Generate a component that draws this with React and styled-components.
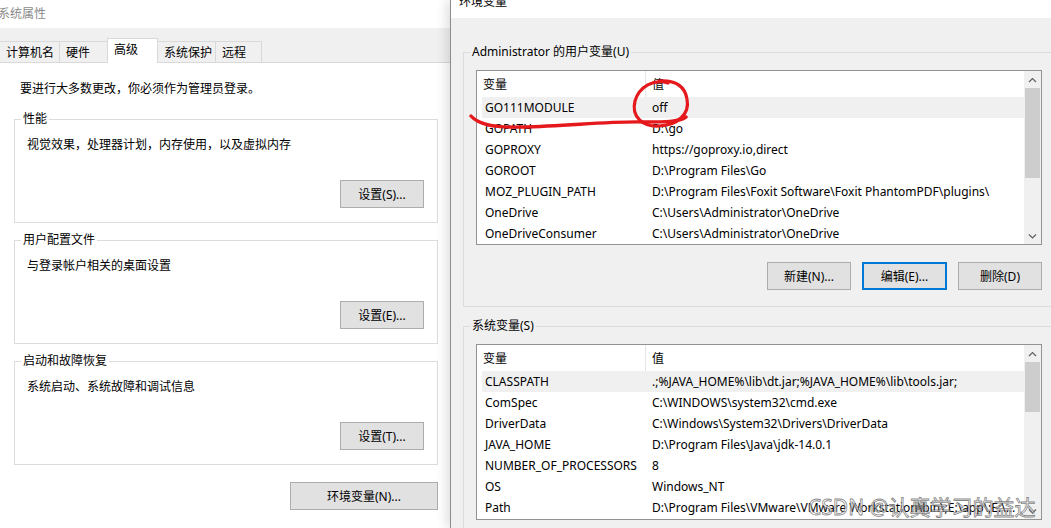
import React from 'react'
import styled, { createGlobalStyle } from 'styled-components'

const GlobalStyle = createGlobalStyle`
  html, body {
    margin: 0;
    padding: 0;
  }
  body {
    width: 1051px;
    height: 528px;
    overflow: hidden;
    background: #fff;
    font-family: "Noto Sans", "Noto Sans CJK SC", sans-serif;
    font-size: 12px;
    color: #000;
  }
  * {
    box-sizing: border-box;
  }
`

const userVars = [
    ['GO111MODULE', 'off'],
    ['GOPATH', 'D:\\go'],
    ['GOPROXY', 'https://goproxy.io,direct'],
    ['GOROOT', 'D:\\Program Files\\Go'],
    ['MOZ_PLUGIN_PATH', 'D:\\Program Files\\Foxit Software\\Foxit PhantomPDF\\plugins\\'],
    ['OneDrive', 'C:\\Users\\Administrator\\OneDrive'],
    ['OneDriveConsumer', 'C:\\Users\\Administrator\\OneDrive'],
]

const sysVars = [
    ['CLASSPATH', '.;%JAVA_HOME%\\lib\\dt.jar;%JAVA_HOME%\\lib\\tools.jar;'],
    ['ComSpec', 'C:\\WINDOWS\\system32\\cmd.exe'],
    ['DriverData', 'C:\\Windows\\System32\\Drivers\\DriverData'],
    ['JAVA_HOME', 'D:\\Program Files\\Java\\jdk-14.0.1'],
    ['NUMBER_OF_PROCESSORS', '8'],
    ['OS', 'Windows_NT'],
    ['Path', 'D:\\Program Files\\VMware\\VMware Workstation\\bin\\;E:\\app\\;E:\\app\\product\\11.2.0\\dbhome_1\\bin;'],
]

const tabs = [
    { label: '计算机名', w: 60 },
    { label: '硬件', w: 49 },
    { label: '高级', w: 51, active: true },
    { label: '系统保护', w: 59 },
    { label: '远程', w: 47 },
]

const groups = [
    { title: '性能', text: '视觉效果，处理器计划，内存使用，以及虚拟内存', btn: '设置(S)...' },
    { title: '用户配置文件', text: '与登录帐户相关的桌面设置', btn: '设置(E)...' },
    { title: '启动和故障恢复', text: '系统启动、系统故障和调试信息', btn: '设置(T)...' },
]

const Chevron = ({ down }) => (
    <svg width="9" height="6" viewBox="0 0 9 6">
        <polyline
            points={down ? '1,1.5 4.5,5 8,1.5' : '1,5 4.5,1.5 8,5'}
            fill="none"
            stroke="#606060"
            strokeWidth="1.2"
        />
    </svg>
)

const VarList = ({ rows, thumb, height }) => (
    <ListBox $h={height}>
        <ListMain>
            <ListHeader>
                <HeadCell $first>变量</HeadCell>
                <HeadCell>值</HeadCell>
            </ListHeader>
            {rows.map(([name, value], i) => (
                <ListRow key={name} $selected={i === 0}>
                    <Cell $first>{name}</Cell>
                    <Cell>{value}</Cell>
                </ListRow>
            ))}
        </ListMain>
        <ScrollBar>
            <Arrow><Chevron /></Arrow>
            <Thumb $h={thumb} />
            <ScrollSpace />
            <Arrow><Chevron down /></Arrow>
        </ScrollBar>
    </ListBox>
)

const App = () => {
    return (
        <>
            <GlobalStyle />
            <Screen>
                <LeftWindow>
                    <LeftTitle>
                        <TitleText $muted>系统属性</TitleText>
                    </LeftTitle>
                    <TabStrip>
                        {tabs.map((t) => (
                            <Tab key={t.label} $w={t.w} $active={t.active}>{t.label}</Tab>
                        ))}
                    </TabStrip>
                    <LeftContent>
                        <Notice>要进行大多数更改，你必须作为管理员登录。</Notice>
                        {groups.map((g) => (
                            <LeftGroup key={g.title}>
                                <Legend>{g.title}</Legend>
                                <GroupText>{g.text}</GroupText>
                                <ButtonRow $top={27}>
                                    <Button $w={84}>{g.btn}</Button>
                                </ButtonRow>
                            </LeftGroup>
                        ))}
                        <FooterRow>
                            <Button $w={148}>环境变量(N)...</Button>
                        </FooterRow>
                    </LeftContent>
                </LeftWindow>

                <RightWindow>
                    <RightTitle>
                        <TitleText $raised>环境变量</TitleText>
                    </RightTitle>
                    <RightBody>
                        <RightGroup>
                            <Legend>Administrator 的用户变量(U)</Legend>
                            <VarList rows={userVars} thumb={90} height={175} />
                            <ButtonRow $top={17} $gap={11}>
                                <Button $w={84}>新建(N)...</Button>
                                <Button $w={85} $focused>编辑(E)...</Button>
                                <Button $w={84}>删除(D)</Button>
                            </ButtonRow>
                        </RightGroup>
                        <RightGroup $top={11}>
                            <Legend>系统变量(S)</Legend>
                            <VarList rows={sysVars} thumb={50} height={176} />
                        </RightGroup>
                    </RightBody>
                </RightWindow>

                <Watermark>CSDN @认真学习的益达</Watermark>

                <Scribble width="1051" height="528" viewBox="0 0 1051 528">
                    <path
                        d="M668 83 C654 78, 639 87, 635 101 C631 117, 643 127, 659 126 C678 125, 690 114, 687 99 C685 87, 676 80, 659 81"
                        fill="none"
                        stroke="#e5181c"
                        strokeWidth="3.2"
                        strokeLinecap="round"
                    />
                    <path
                        d="M471 116 C478 124, 492 128, 522 127 C570 126, 608 121, 645 122 C664 122, 679 122, 686 117"
                        fill="none"
                        stroke="#e5181c"
                        strokeWidth="3.4"
                        strokeLinecap="round"
                    />
                </Scribble>
            </Screen>
        </>
    )
}

const Screen = styled.div`
    position: relative;
    display: flex;
    width: 1051px;
    height: 528px;
    overflow: hidden;
`

const LeftWindow = styled.div`
    width: 450px;
    flex-shrink: 0;
    display: flex;
    flex-direction: column;
    background: #fff;
`

const LeftTitle = styled.div`
    height: 28px;
    flex-shrink: 0;
    display: flex;
    align-items: center;
    background: #fff;
`

const TitleText = styled.span`
    line-height: 16px;
    color: ${(p) => (p.$muted ? '#8a8a8a' : '#000')};
    margin-left: ${(p) => (p.$muted ? '-2px' : '8px')};
    margin-top: ${(p) => (p.$raised ? '-6px' : '0')};
`

const TabStrip = styled.div`
    height: 35px;
    flex-shrink: 0;
    display: flex;
    align-items: flex-end;
    background: #f0f0f0;
    border-bottom: 1px solid #d9d9d9;
`

const Tab = styled.div`
    width: ${(p) => p.$w}px;
    height: ${(p) => (p.$active ? 25 : 21)}px;
    margin-left: -1px;
    margin-bottom: ${(p) => (p.$active ? '-1px' : '0')};
    padding: 3px 0 0 6px;
    line-height: 16px;
    background: ${(p) => (p.$active ? '#fff' : '#f0f0f0')};
    border: 1px solid #d9d9d9;
    border-bottom: none;
    position: relative;
    z-index: ${(p) => (p.$active ? 1 : 0)};

    &:first-child {
        margin-left: 0;
        border-left: none;
        padding-left: 6px;
    }
`

const LeftContent = styled.div`
    flex: 1;
    display: flex;
    flex-direction: column;
    padding-top: 18px;
    background: #fff;
`

const Notice = styled.div`
    line-height: 16px;
    margin-left: 20px;
`

const LeftGroup = styled.fieldset`
    min-width: 0;
    width: 424px;
    margin: 14px 0 0 14px;
    padding: 10px 13px 14px 12px;
    border: 1px solid #dcdcdc;

    & + & {
        margin-top: 9px;
    }
`

const Legend = styled.legend`
    line-height: 16px;
    padding: 0 2px;
    margin-left: -6px;
`

const GroupText = styled.div`
    line-height: 16px;
`

const ButtonRow = styled.div`
    display: flex;
    justify-content: flex-end;
    gap: ${(p) => p.$gap || 0}px;
    margin-top: ${(p) => p.$top}px;
`

const FooterRow = styled.div`
    display: flex;
    justify-content: flex-end;
    margin-top: 17px;
    padding-right: 12px;
`

const Button = styled.button`
    width: ${(p) => p.$w}px;
    height: 28px;
    padding: 0;
    font: inherit;
    color: #000;
    background: #e1e1e1;
    border: ${(p) => (p.$focused ? '2px solid #0078d7' : '1px solid #adadad')};
`

const RightWindow = styled.div`
    width: 620px;
    flex-shrink: 0;
    display: flex;
    flex-direction: column;
    background: #f0f0f0;
    border-left: 1px solid #8c8c8c;
    box-shadow: -4px 0 10px rgba(0, 0, 0, 0.12);
    position: relative;
    z-index: 1;
`

const RightTitle = styled.div`
    height: 18px;
    flex-shrink: 0;
    display: flex;
    align-items: flex-start;
    background: #fff;
    overflow: hidden;
`

const RightBody = styled.div`
    flex-shrink: 0;
    padding: 26px 0 0 12px;
`

const RightGroup = styled.fieldset`
    min-width: 0;
    width: 592px;
    margin: ${(p) => p.$top || 0}px 0 0 0;
    padding: 10px 12px 16px 12px;
    border: 1px solid #dcdcdc;
`

const ListBox = styled.div`
    height: ${(p) => p.$h}px;
    display: flex;
    border: 1px solid #939393;
    background: #fff;
    overflow: hidden;
`

const ListMain = styled.div`
    flex: 1;
    min-width: 0;
    padding-left: 5px;
    background: #fff;
`

const ListHeader = styled.div`
    display: grid;
    grid-template-columns: 164px 1fr;
    height: 26px;
`

const HeadCell = styled.div`
    display: flex;
    align-items: center;
    padding-left: ${(p) => (p.$first ? 1 : 6)}px;
    border-right: ${(p) => (p.$first ? '1px solid #e5e5e5' : 'none')};
`

const ListRow = styled.div`
    display: grid;
    grid-template-columns: 164px 1fr;
    height: 21px;
    background: ${(p) => (p.$selected ? '#f0f0f0' : '#fff')};
`

const Cell = styled.div`
    line-height: 21px;
    padding-left: ${(p) => (p.$first ? 3 : 6)}px;
    padding-right: 6px;
    white-space: nowrap;
    overflow: hidden;
    text-overflow: ellipsis;
`

const ScrollBar = styled.div`
    width: 17px;
    flex-shrink: 0;
    display: flex;
    flex-direction: column;
    background: #f0f0f0;
`

const Arrow = styled.div`
    height: 17px;
    flex-shrink: 0;
    display: flex;
    align-items: center;
    justify-content: center;
`

const Thumb = styled.div`
    height: ${(p) => p.$h}px;
    flex-shrink: 0;
    margin: 0 1px;
    background: #cdcdcd;
`

const ScrollSpace = styled.div`
    flex: 1;
`

const Watermark = styled.div`
    position: absolute;
    left: 808px;
    top: 493px;
    font-size: 21px;
    line-height: 28px;
    white-space: nowrap;
    color: rgba(255, 255, 255, 0.6);
    -webkit-text-stroke: 0.8px rgba(80, 80, 80, 0.7);
    z-index: 4;
    pointer-events: none;
`

const Scribble = styled.svg`
    position: absolute;
    left: 0;
    top: 0;
    z-index: 5;
    pointer-events: none;
`

export default App
